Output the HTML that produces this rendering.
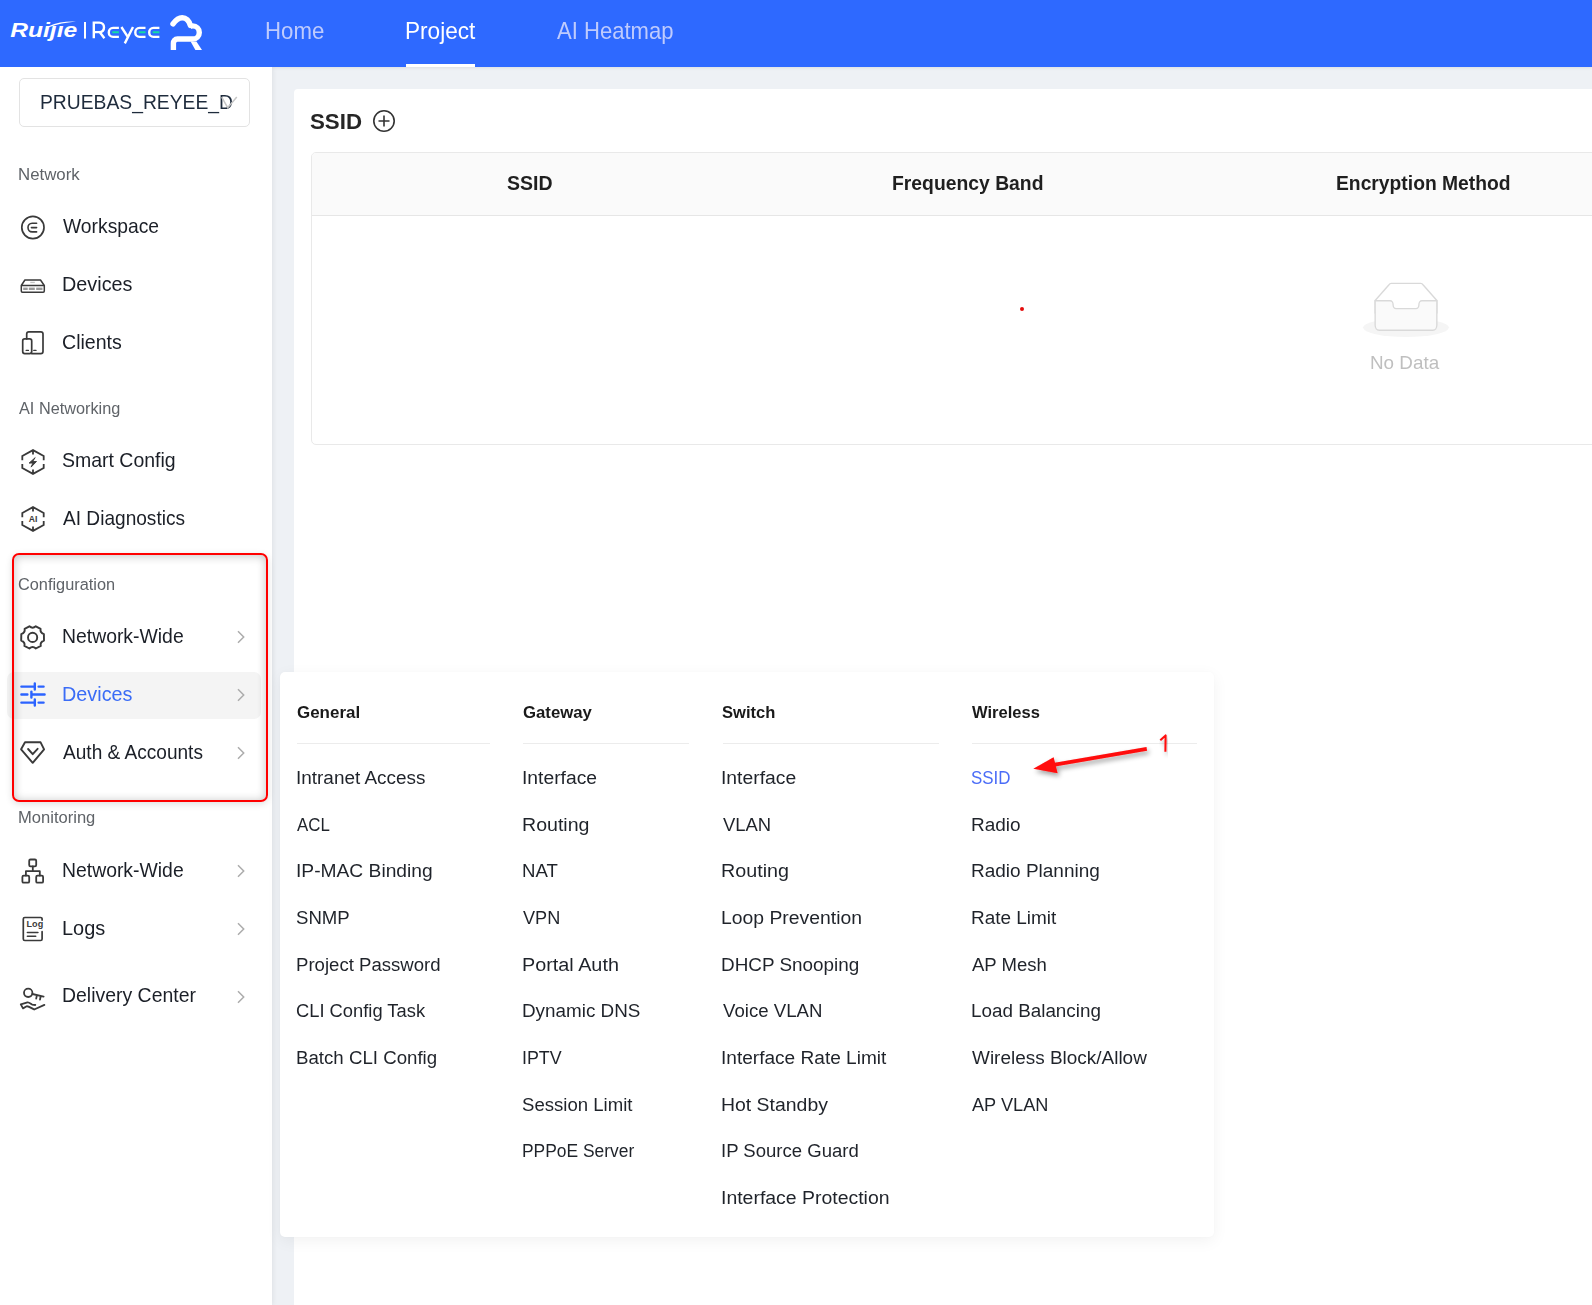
<!DOCTYPE html><html><head><meta charset="utf-8"><style>
*{margin:0;padding:0;box-sizing:border-box}
html,body{width:1592px;height:1305px;overflow:hidden;background:#eef1f5;font-family:"Liberation Sans",sans-serif}
.t{position:absolute;white-space:nowrap;line-height:1;transform-origin:0 0}
.abs{position:absolute}
svg{position:absolute;overflow:visible}
</style></head><body>
<div class="abs" style="left:0;top:0;width:1592px;height:67px;background:#2e69ff;z-index:2;box-shadow:0 1px 3px rgba(0,0,0,0.08)"></div>
<svg style="left:0;top:0;z-index:3" width="220" height="67" viewBox="0 0 220 67">
<text x="10.2" y="37.2" font-family="Liberation Sans" font-weight="bold" font-style="italic" font-size="20.5" fill="#fff" textLength="67" lengthAdjust="spacingAndGlyphs">Ruiȷıe</text>
<path d="M48.5 26.2 C57 22.5 66 21.2 76 21.6 C66 22.6 57 24.2 48.8 27.3 Z" fill="#fff"/>
<rect x="84" y="22" width="2" height="16.6" fill="#fff"/>
<g stroke="#fff" stroke-width="2.4" fill="none">
<path d="M93.8 38.2 V22.6 H99.3 C102.4 22.6 104 24.8 104 27.3 C104 29.9 102.4 32.1 99.3 32.1 H93.8 M99.6 32.1 L104.4 38.2"/>
<path d="M118.9 27.9 H113.1 C110.4 27.9 108.8 30 108.8 32.4 C108.8 34.8 110.4 36.9 113.1 36.9 H118.9"/>
<path d="M121.4 27 L127.6 36.6 M133 27 L124.8 43.4"/>
<path d="M145.5 27.9 H139.6 C136.9 27.9 135.3 30 135.3 32.4 C135.3 34.8 136.9 36.9 139.6 36.9 H145.5"/>
<path d="M159.4 27.9 H153.5 C150.8 27.9 149.2 30 149.2 32.4 C149.2 34.8 150.8 36.9 153.5 36.9 H159.4"/>
</g>
<g stroke="#12dba6" stroke-width="2.1" fill="none">
<path d="M112.3 32.3 H118.9 M138.8 32.3 H145.5 M152.7 32.3 H159.4"/>
</g>
<g stroke="#fff" stroke-width="5.4" fill="none" stroke-linejoin="round">
<path d="M173 23.9 C175.6 20.3 178.8 17.7 182.2 17.7 C186 17.7 189.2 20.6 190.3 25.4" stroke-linecap="round"/>
<path d="M189.8 26.9 C190.8 26.1 191.8 25.9 192.7 25.9 C196.5 25.9 199.3 28.9 199.3 32.4 C199.3 36 196.5 39 192.7 39 L177.5 39 C174.8 39 173.4 40.8 173.4 43.2 L173.4 50" stroke-linecap="butt"/>
</g>
<polygon fill="#fff" points="190.6,41.6 196.4,41.6 202,50 195.4,50"/>
</svg>
<div class="t" style="left:264.81px;top:20px;font-size:23.4px;color:#bfcbfd;transform:scaleX(0.9505);z-index:3;">Home</div>
<div class="t" style="left:404.88px;top:20px;font-size:23.4px;color:#ffffff;transform:scaleX(0.9668);z-index:3;">Project</div>
<div class="t" style="left:557.30px;top:20px;font-size:23.4px;color:#bfcbfd;transform:scaleX(0.9437);z-index:3;">AI Heatmap</div>
<div class="abs" style="left:406px;top:64px;width:69px;height:3px;background:#fff;z-index:3"></div>
<div class="abs" style="left:0;top:67px;width:272px;height:1238px;background:#fff;box-shadow:1px 0 5px rgba(0,0,0,0.07)"></div>
<div class="abs" style="left:0;top:67px;width:272px;height:6px;background:#fff;z-index:3"></div>
<div class="abs" style="left:19px;top:78px;width:231px;height:49px;border:1px solid #e3e3e3;border-radius:5px;background:#fff"></div>
<div class="t" style="left:40.28px;top:93px;font-size:19.76px;color:#1e2b3c;transform:scaleX(0.9767);">PRUEBAS_REYEE_D</div>
<svg style="left:220px;top:95px" width="20" height="16"><path d="M1.7 2.1 L7.7 12.7 L16.8 2.1" stroke="#c6c6c6" stroke-width="1.5" fill="none"/></svg>
<div class="t" style="left:18.07px;top:167px;font-size:16.64px;color:#5f6368;transform:scaleX(1.0113);">Network</div>
<div class="t" style="left:19.19px;top:401px;font-size:16.64px;color:#5f6368;transform:scaleX(0.9789);">AI Networking</div>
<div class="t" style="left:18.44px;top:577px;font-size:16.64px;color:#5f6368;transform:scaleX(0.9814);">Configuration</div>
<div class="t" style="left:18.10px;top:810px;font-size:16.64px;color:#5f6368;transform:scaleX(0.9961);">Monitoring</div>
<div class="abs" style="left:7px;top:672px;width:254px;height:47px;background:#f4f4f4;border-radius:7px"></div>
<div class="t" style="left:63.19px;top:217px;font-size:19.76px;color:#1b1f27;transform:scaleX(0.9761);">Workspace</div>
<div class="t" style="left:61.83px;top:275px;font-size:19.76px;color:#1b1f27;transform:scaleX(1.0031);">Devices</div>
<div class="t" style="left:62.35px;top:333px;font-size:19.76px;color:#1b1f27;transform:scaleX(0.9913);">Clients</div>
<div class="t" style="left:62.17px;top:451px;font-size:19.76px;color:#1b1f27;transform:scaleX(0.9863);">Smart Config</div>
<div class="t" style="left:63.19px;top:509px;font-size:19.76px;color:#1b1f27;transform:scaleX(0.9670);">AI Diagnostics</div>
<div class="t" style="left:61.87px;top:627px;font-size:19.76px;color:#1b1f27;transform:scaleX(0.9810);">Network-Wide</div>
<svg style="left:235px;top:629px" width="12" height="16"><path d="M3 2.2 L8.7 8 L3 13.8" stroke="#acacac" stroke-width="1.5" fill="none"/></svg>
<div class="t" style="left:61.83px;top:685px;font-size:19.76px;color:#3a6cf6;transform:scaleX(1.0031);">Devices</div>
<svg style="left:235px;top:687px" width="12" height="16"><path d="M3 2.2 L8.7 8 L3 13.8" stroke="#acacac" stroke-width="1.5" fill="none"/></svg>
<div class="t" style="left:63.19px;top:743px;font-size:19.76px;color:#1b1f27;transform:scaleX(0.9657);">Auth &amp; Accounts</div>
<svg style="left:235px;top:745px" width="12" height="16"><path d="M3 2.2 L8.7 8 L3 13.8" stroke="#acacac" stroke-width="1.5" fill="none"/></svg>
<div class="t" style="left:61.87px;top:861px;font-size:19.76px;color:#1b1f27;transform:scaleX(0.9810);">Network-Wide</div>
<svg style="left:235px;top:863px" width="12" height="16"><path d="M3 2.2 L8.7 8 L3 13.8" stroke="#acacac" stroke-width="1.5" fill="none"/></svg>
<div class="t" style="left:61.82px;top:919px;font-size:19.76px;color:#1b1f27;transform:scaleX(1.0099);">Logs</div>
<svg style="left:235px;top:921px" width="12" height="16"><path d="M3 2.2 L8.7 8 L3 13.8" stroke="#acacac" stroke-width="1.5" fill="none"/></svg>
<div class="t" style="left:61.87px;top:986px;font-size:19.76px;color:#1b1f27;transform:scaleX(0.9843);">Delivery Center</div>
<svg style="left:235px;top:989.3px" width="12" height="16"><path d="M3 2.2 L8.7 8 L3 13.8" stroke="#acacac" stroke-width="1.5" fill="none"/></svg>
<svg style="left:18px;top:213px" width="30" height="28" viewBox="0 0 30 28"><g stroke="#3a3a3a" stroke-width="1.7" fill="none" stroke-linecap="round" stroke-linejoin="round"><circle cx="14.9" cy="14.5" r="11.1"/><path d="M18.6 10.3 H14.1 C11.6 10.3 10 12.3 10 14.6 C10 16.9 11.6 18.9 14.1 18.9 H18.6 M13.4 14.6 H18.6" stroke-width="1.6"/></g></svg>
<svg style="left:18px;top:271.5px" width="30" height="28" viewBox="0 0 30 28"><g stroke="#3a3a3a" stroke-width="1.7" fill="none" stroke-linecap="round" stroke-linejoin="round"><path d="M3.3 13.5 L6.9 8 H22.5 L26.3 13.5 V19 C26.3 19.6 25.8 20.2 25.2 20.2 H4.4 C3.8 20.2 3.3 19.6 3.3 19 Z M3.3 13.5 H26.3" stroke-width="1.5"/><g fill="#9a9a9a" stroke="none"><rect x="5.2" y="15.6" width="4.5" height="2.4"/><rect x="10.8" y="15.6" width="6" height="2.4"/><rect x="18.2" y="15.6" width="6.3" height="2.4"/><rect x="12.3" y="9.8" width="4.5" height="1.3" fill="#c4c4c4"/></g></g></svg>
<svg style="left:18px;top:329px" width="30" height="28" viewBox="0 0 30 28"><g stroke="#3a3a3a" stroke-width="1.7" fill="none" stroke-linecap="round" stroke-linejoin="round"><path d="M8.7 9.9 V5 C8.7 3.8 9.7 2.9 10.9 2.9 H22.8 C24 2.9 25 3.8 25 5 V22.4 C25 23.6 24 24.6 22.8 24.6 H13.7"/><rect x="4.7" y="9.9" width="9" height="14.7" rx="2"/><path d="M8.2 21.4 H10.4 M15.8 21.4 H18" stroke-width="1.4"/></g></svg>
<svg style="left:18px;top:447.6px" width="30" height="28" viewBox="0 0 30 28"><g stroke="#3a3a3a" stroke-width="1.7" fill="none" stroke-linecap="round" stroke-linejoin="round"><path d="M4.3 12.2 V8 L15 2.1 L25.7 8 V12.2 M25.7 15.9 V20 L15 25.9 L4.3 20 V15.9 M15 2.1 V6.4 M15 25.9 V21.6" stroke-width="1.8" stroke-linecap="butt" stroke-linejoin="miter"/><polygon points="16.9,9.9 11.1,15.1 14.9,15.1 13.1,19.1 18.5,13.5 14.9,13.5" fill="#3a3a3a" stroke="#3a3a3a" stroke-width="0.9"/></g></svg>
<svg style="left:18px;top:504.7px" width="30" height="28" viewBox="0 0 30 28"><g stroke="#3a3a3a" stroke-width="1.7" fill="none" stroke-linecap="round" stroke-linejoin="round"><path d="M4.3 12.2 V8 L15 2.1 L25.7 8 V12.2 M25.7 15.9 V20 L15 25.9 L4.3 20 V15.9 M15 2.1 V6.4 M15 25.9 V21.6" stroke-width="1.8" stroke-linecap="butt" stroke-linejoin="miter"/></g><text x="15" y="17.3" text-anchor="middle" font-family="Liberation Sans" font-size="9.4" font-weight="bold" fill="#3a3a3a" textLength="8.6" lengthAdjust="spacingAndGlyphs">AI</text></svg>
<svg style="left:18px;top:623px" width="30" height="28" viewBox="0 0 30 28"><g stroke="#3a3a3a" stroke-width="1.7" fill="none" stroke-linecap="round" stroke-linejoin="round"><path d="M11.4 3.3 Q14.6 6.2 17.8 3.3 L22.6 5.9 Q21.8 9.6 25.9 11.1 L26 17.6 Q21.8 19.2 22.8 22.9 L17.8 25.5 Q14.6 22.6 11.4 25.5 L6.4 22.9 Q7.4 19.2 3.2 17.6 L3.3 11.1 Q7.4 9.6 6.6 5.9 Z" stroke-width="1.9"/><circle cx="14.6" cy="14.4" r="4.6" stroke-width="1.9"/></g></svg>
<svg style="left:18px;top:681px" width="30" height="28" viewBox="0 0 30 28"><g stroke="#2b63ff" stroke-width="1.7" fill="none" stroke-linecap="round" stroke-linejoin="round"><path d="M3.4 5.6 H16.8 M16.8 2.4 V8.6 M20.6 5.6 H25.6 M3.4 13.5 H9.4 M13.4 10.6 V16.6 M13.4 13.5 H26.6 M3.4 21.6 H16.8 M16.8 18.4 V24.6 M20.6 21.6 H25.6" stroke-width="2.4"/></g></svg>
<svg style="left:18px;top:739px" width="30" height="28" viewBox="0 0 30 28"><g stroke="#3a3a3a" stroke-width="1.7" fill="none" stroke-linecap="round" stroke-linejoin="round"><path d="M7 3.3 H22.6 L26.1 10.3 L14.7 23.8 L3.1 10.3 Z" stroke-width="1.9"/><path d="M10.1 10 L14.7 15.2 L19.6 9.8" stroke-width="1.9"/></g></svg>
<svg style="left:18px;top:856.5px" width="30" height="28" viewBox="0 0 30 28"><g stroke="#3a3a3a" stroke-width="1.8" fill="none" stroke-linecap="round" stroke-linejoin="round"><rect x="11.2" y="2.5" width="7" height="6.8" rx="1.3"/><path d="M14.8 9.3 V14.2 M7.9 18.6 V14.2 H21.8 V18.6"/><rect x="4.4" y="18.6" width="6.8" height="7.1" rx="1.3"/><rect x="18.2" y="18.6" width="6.9" height="7.1" rx="1.3"/></g></svg>
<svg style="left:18px;top:914.5px" width="30" height="28" viewBox="0 0 30 28"><g stroke="#3a3a3a" stroke-width="1.7" fill="none" stroke-linecap="round" stroke-linejoin="round"><path d="M24.1 5.1 V4 C24.1 3.2 23.4 2.5 22.6 2.5 H6.8 C6 2.5 5.3 3.2 5.3 4 V24 C5.3 24.8 6 25.5 6.8 25.5 H22.6 C23.4 25.5 24.1 24.8 24.1 24 V16.7" stroke-width="1.7"/><path d="M9.4 17.5 H19.9 M9.4 21.3 H17.7" stroke-width="1.6"/></g><text x="8.6" y="12.3" font-family="Liberation Sans" font-weight="bold" font-size="8.4" fill="#3a3a3a" textLength="16.6" lengthAdjust="spacingAndGlyphs">Log</text></svg>
<svg style="left:18px;top:983.5px" width="30" height="28" viewBox="0 0 30 28"><g stroke="#3a3a3a" stroke-width="1.8" fill="none" stroke-linecap="round" stroke-linejoin="round"><circle cx="10.2" cy="8.8" r="4.2"/><path d="M14.4 10 L25.6 12.6 M18.9 11.1 L18.2 14.6 M22.7 12 L22 15.7"/><path d="M2.8 20.4 L9.5 18.3 C11 18 12.5 19.6 14.1 20.6 L17.3 21 M2.8 20.4 L5 24.4 L8.7 22.3 C10.2 21.9 12.5 23.6 16.2 25.5 L26.4 20.9"/></g></svg>
<div class="abs" style="left:11.5px;top:553.3px;width:256.5px;height:248.5px;border:2px solid #ff0000;border-radius:7px;box-shadow:inset 0 1px 10px rgba(0,0,0,0.24),0 2px 7px rgba(0,0,0,0.13)"></div>
<div class="abs" style="left:294px;top:89px;width:1400px;height:1300px;background:#fff;border-radius:4px"></div>
<div class="t" style="left:309.78px;top:110px;font-size:22.88px;color:#262626;font-weight:bold;transform:scaleX(0.9737);">SSID</div>
<svg style="left:372px;top:109px" width="24" height="24"><circle cx="12" cy="12" r="10.2" stroke="#333" stroke-width="1.6" fill="none"/><path d="M12 6.5 V17.5 M6.5 12 H17.5" stroke="#333" stroke-width="1.6"/></svg>
<div class="abs" style="left:311px;top:152px;width:1400px;height:293px;border:1px solid #e9e9e9;border-radius:5px"></div>
<div class="abs" style="left:312px;top:153px;width:1400px;height:63px;background:#fafafa;border-bottom:1px solid #e6e6e6;border-top-left-radius:4px"></div>
<div class="t" style="left:506.67px;top:174px;font-size:19.76px;color:#1f1f1f;font-weight:bold;transform:scaleX(0.9877);">SSID</div>
<div class="t" style="left:891.75px;top:174px;font-size:19.76px;color:#1f1f1f;font-weight:bold;transform:scaleX(0.9790);">Frequency Band</div>
<div class="t" style="left:1335.65px;top:174px;font-size:19.76px;color:#1f1f1f;font-weight:bold;transform:scaleX(0.9762);">Encryption Method</div>
<svg style="left:1363px;top:282px" width="86" height="55" viewBox="0 0 64 41"><g transform="translate(0 1)" fill="none" fill-rule="evenodd"><ellipse fill="#f5f5f5" cx="32" cy="33" rx="32" ry="7"/><g fill-rule="nonzero" stroke="#d9d9d9"><path d="M55 12.76L44.854 1.258C44.367.474 43.656 0 42.907 0H21.093c-.749 0-1.46.474-1.947 1.257L9 12.761V22h46v-9.24z"/><path d="M41.613 15.931c0-1.605.994-2.93 2.227-2.931H55v18.137C55 33.26 53.68 35 52.05 35h-40.1C10.32 35 9 33.259 9 31.137V13h11.16c1.233 0 2.227 1.323 2.227 2.928v.022c0 1.605 1.005 2.901 2.237 2.901h14.752c1.232 0 2.237-1.308 2.237-2.913v-.007z" fill="#fafafa"/></g></g></svg>
<div class="t" style="left:1370.12px;top:354px;font-size:18.72px;color:#bfbfbf;transform:scaleX(1.0081);">No Data</div>
<div class="abs" style="left:1019.7px;top:306.7px;width:4.6px;height:4.6px;border-radius:50%;background:#e40c0c"></div>
<div class="abs" style="left:280px;top:672px;width:934px;height:565px;background:#fff;border-radius:5px;box-shadow:0 4px 16px rgba(0,0,0,0.055),0 0 3px rgba(0,0,0,0.02)"></div>
<div class="t" style="left:296.67px;top:704px;font-size:17px;color:#1a1a1a;font-weight:bold;transform:scaleX(0.9967);">General</div>
<div class="abs" style="left:297px;top:743px;width:193px;height:1px;background:#ececec"></div>
<div class="t" style="left:295.65px;top:769px;font-size:18px;color:#1f232a;transform:scaleX(1.0518);">Intranet Access</div>
<div class="t" style="left:297.10px;top:816px;font-size:18px;color:#1f232a;transform:scaleX(0.9368);">ACL</div>
<div class="t" style="left:295.63px;top:862px;font-size:18px;color:#1f232a;transform:scaleX(1.0673);">IP-MAC Binding</div>
<div class="t" style="left:296.18px;top:909px;font-size:18px;color:#1f232a;transform:scaleX(1.0332);">SNMP</div>
<div class="t" style="left:295.84px;top:956px;font-size:18px;color:#1f232a;transform:scaleX(1.0325);">Project Password</div>
<div class="t" style="left:296.27px;top:1002px;font-size:18px;color:#1f232a;transform:scaleX(1.0183);">CLI Config Task</div>
<div class="t" style="left:295.83px;top:1049px;font-size:18px;color:#1f232a;transform:scaleX(1.0373);">Batch CLI Config</div>
<div class="t" style="left:522.78px;top:704px;font-size:17px;color:#1a1a1a;font-weight:bold;transform:scaleX(0.9858);">Gateway</div>
<div class="abs" style="left:523px;top:743px;width:166px;height:1px;background:#ececec"></div>
<div class="t" style="left:521.72px;top:769px;font-size:18px;color:#1f232a;transform:scaleX(1.0715);">Interface</div>
<div class="t" style="left:521.86px;top:816px;font-size:18px;color:#1f232a;transform:scaleX(1.0871);">Routing</div>
<div class="t" style="left:521.94px;top:862px;font-size:18px;color:#1f232a;transform:scaleX(1.0328);">NAT</div>
<div class="t" style="left:523.17px;top:909px;font-size:18px;color:#1f232a;transform:scaleX(1.0062);">VPN</div>
<div class="t" style="left:521.84px;top:956px;font-size:18px;color:#1f232a;transform:scaleX(1.1004);">Portal Auth</div>
<div class="t" style="left:521.92px;top:1002px;font-size:18px;color:#1f232a;transform:scaleX(1.0472);">Dynamic DNS</div>
<div class="t" style="left:521.85px;top:1049px;font-size:18px;color:#1f232a;transform:scaleX(0.9919);">IPTV</div>
<div class="t" style="left:522.28px;top:1096px;font-size:18px;color:#1f232a;transform:scaleX(1.0323);">Session Limit</div>
<div class="t" style="left:522.04px;top:1142px;font-size:18px;color:#1f232a;transform:scaleX(0.9673);">PPPoE Server</div>
<div class="t" style="left:722.29px;top:704px;font-size:17px;color:#1a1a1a;font-weight:bold;transform:scaleX(0.9735);">Switch</div>
<div class="abs" style="left:723px;top:743px;width:216px;height:1px;background:#ececec"></div>
<div class="t" style="left:721.22px;top:769px;font-size:18px;color:#1f232a;transform:scaleX(1.0730);">Interface</div>
<div class="t" style="left:722.66px;top:816px;font-size:18px;color:#1f232a;transform:scaleX(1.0247);">VLAN</div>
<div class="t" style="left:721.35px;top:862px;font-size:18px;color:#1f232a;transform:scaleX(1.0956);">Routing</div>
<div class="t" style="left:721.38px;top:909px;font-size:18px;color:#1f232a;transform:scaleX(1.0754);">Loop Prevention</div>
<div class="t" style="left:721.42px;top:956px;font-size:18px;color:#1f232a;transform:scaleX(1.0485);">DHCP Snooping</div>
<div class="t" style="left:722.66px;top:1002px;font-size:18px;color:#1f232a;transform:scaleX(1.0342);">Voice VLAN</div>
<div class="t" style="left:721.24px;top:1049px;font-size:18px;color:#1f232a;transform:scaleX(1.0596);">Interface Rate Limit</div>
<div class="t" style="left:721.37px;top:1096px;font-size:18px;color:#1f232a;transform:scaleX(1.0791);">Hot Standby</div>
<div class="t" style="left:721.29px;top:1142px;font-size:18px;color:#1f232a;transform:scaleX(1.0307);">IP Source Guard</div>
<div class="t" style="left:721.21px;top:1189px;font-size:18px;color:#1f232a;transform:scaleX(1.0798);">Interface Protection</div>
<div class="t" style="left:972.29px;top:704px;font-size:17px;color:#1a1a1a;font-weight:bold;transform:scaleX(0.9725);">Wireless</div>
<div class="abs" style="left:972px;top:743px;width:225px;height:1px;background:#ececec"></div>
<div class="t" style="left:971.39px;top:769px;font-size:18px;color:#4a6cf7;transform:scaleX(0.9409);">SSID</div>
<div class="t" style="left:970.91px;top:816px;font-size:18px;color:#1f232a;transform:scaleX(1.0551);">Radio</div>
<div class="t" style="left:970.91px;top:862px;font-size:18px;color:#1f232a;transform:scaleX(1.0551);">Radio Planning</div>
<div class="t" style="left:970.91px;top:909px;font-size:18px;color:#1f232a;transform:scaleX(1.0534);">Rate Limit</div>
<div class="t" style="left:972.17px;top:956px;font-size:18px;color:#1f232a;transform:scaleX(1.0301);">AP Mesh</div>
<div class="t" style="left:970.92px;top:1002px;font-size:18px;color:#1f232a;transform:scaleX(1.0467);">Load Balancing</div>
<div class="t" style="left:972.19px;top:1049px;font-size:18px;color:#1f232a;transform:scaleX(1.0531);">Wireless Block/Allow</div>
<div class="t" style="left:972.18px;top:1096px;font-size:18px;color:#1f232a;transform:scaleX(1.0085);">AP VLAN</div>
<svg style="left:0;top:0;z-index:5" width="1592" height="1305">
<defs><filter id="ds" x="-30%" y="-80%" width="160%" height="260%"><feGaussianBlur in="SourceAlpha" stdDeviation="2.4"/><feOffset dx="1.5" dy="2.5"/><feComponentTransfer><feFuncA type="linear" slope="0.38"/></feComponentTransfer><feMerge><feMergeNode/><feMergeNode in="SourceGraphic"/></feMerge></filter></defs>
<g filter="url(#ds)">
<path d="M1146.8 748.9 L1052 765.2" stroke="#ff0a0a" stroke-width="3.8" stroke-linecap="butt"/>
<polygon points="1033.3,768.7 1053.6,757.2 1057.6,773.2" fill="#ff0a0a"/>
</g>
<g filter="url(#ds)">
<path d="M1160.3 740.2 L1165.6 735.4 L1165.4 751.8" stroke="#ff0a0a" stroke-width="2" fill="none" stroke-linejoin="round"/>
</g>
</svg>
</body></html>
